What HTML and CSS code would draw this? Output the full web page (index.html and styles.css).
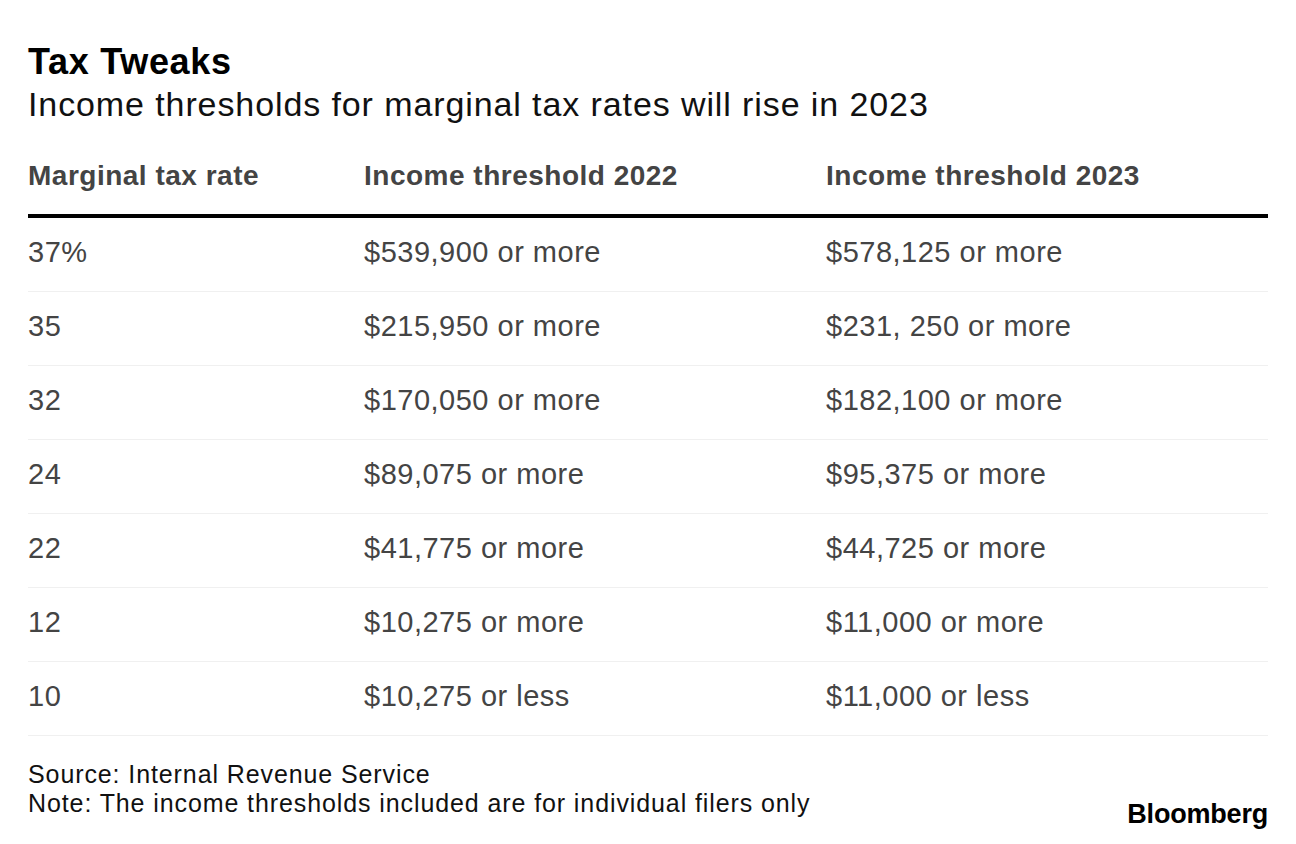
FILE: index.html
```html
<!DOCTYPE html>
<html lang="en">
<head>
<meta charset="utf-8">
<title>Tax Tweaks</title>
<link rel="stylesheet" href="styles.css">
</head>
<body>
<div class="chart">
  <h1 class="title">Tax Tweaks</h1>
  <p class="subtitle">Income thresholds for marginal tax rates will rise in 2023</p>
  <div class="table">
    <div class="row head">
      <div class="cell">Marginal tax rate</div>
      <div class="cell">Income threshold 2022</div>
      <div class="cell">Income threshold 2023</div>
    </div>
    <div class="row">
      <div class="cell">37%</div>
      <div class="cell">$539,900 or more</div>
      <div class="cell">$578,125 or more</div>
    </div>
    <div class="row">
      <div class="cell">35</div>
      <div class="cell">$215,950 or more</div>
      <div class="cell">$231, 250 or more</div>
    </div>
    <div class="row">
      <div class="cell">32</div>
      <div class="cell">$170,050 or more</div>
      <div class="cell">$182,100 or more</div>
    </div>
    <div class="row">
      <div class="cell">24</div>
      <div class="cell">$89,075 or more</div>
      <div class="cell">$95,375 or more</div>
    </div>
    <div class="row">
      <div class="cell">22</div>
      <div class="cell">$41,775 or more</div>
      <div class="cell">$44,725 or more</div>
    </div>
    <div class="row">
      <div class="cell">12</div>
      <div class="cell">$10,275 or more</div>
      <div class="cell">$11,000 or more</div>
    </div>
    <div class="row">
      <div class="cell">10</div>
      <div class="cell">$10,275 or less</div>
      <div class="cell">$11,000 or less</div>
    </div>
  </div>
  <div class="footer">
    <div class="notes">
      <p>Source: Internal Revenue Service</p>
      <p>Note: The income thresholds included are for individual filers only</p>
    </div>
    <div class="logo">Bloomberg</div>
  </div>
</div>
</body>
</html>
```

FILE: styles.css
```css
* { box-sizing: border-box; }
html, body { margin: 0; padding: 0; background: #fff; }
body { font-family: "Liberation Sans", Arial, sans-serif; color: #000; }

.chart {
  width: 1296px;
  height: 844px;
  padding: 42px 28px 0 28px;
}

.title {
  margin: 0;
  font-size: 36px;
  line-height: 40px;
  font-weight: 700;
  letter-spacing: 0.7px;
  color: #000;
}

.subtitle {
  margin: 2px 0 0 0;
  font-size: 34px;
  line-height: 40px;
  font-weight: 400;
  letter-spacing: 0.9px;
  color: #111;
}

.table { display: flex; flex-direction: column; }

.row {
  display: grid;
  grid-template-columns: 336px 462px 1fr;
  padding: 20px 0 25px 0;
  border-bottom: 1px solid #f0f0f0;
  font-size: 29px;
  line-height: 28px;
  letter-spacing: 0.5px;
  color: #444;
}

.row.head {
  padding: 38px 0 24px 0;
  border-bottom: 4px solid #000;
  font-size: 28px;
  font-weight: 700;
  letter-spacing: 0.5px;
  color: #444;
}

.footer {
  display: flex;
  justify-content: space-between;
  align-items: flex-start;
  margin-top: 24px;
}

.notes p {
  margin: 0;
  font-size: 25px;
  line-height: 29px;
  letter-spacing: 0.9px;
  color: #111;
}

.logo {
  padding-top: 41px;
  font-size: 27px;
  line-height: 26px;
  font-weight: 700;
  letter-spacing: -0.2px;
  color: #000;
}
```
